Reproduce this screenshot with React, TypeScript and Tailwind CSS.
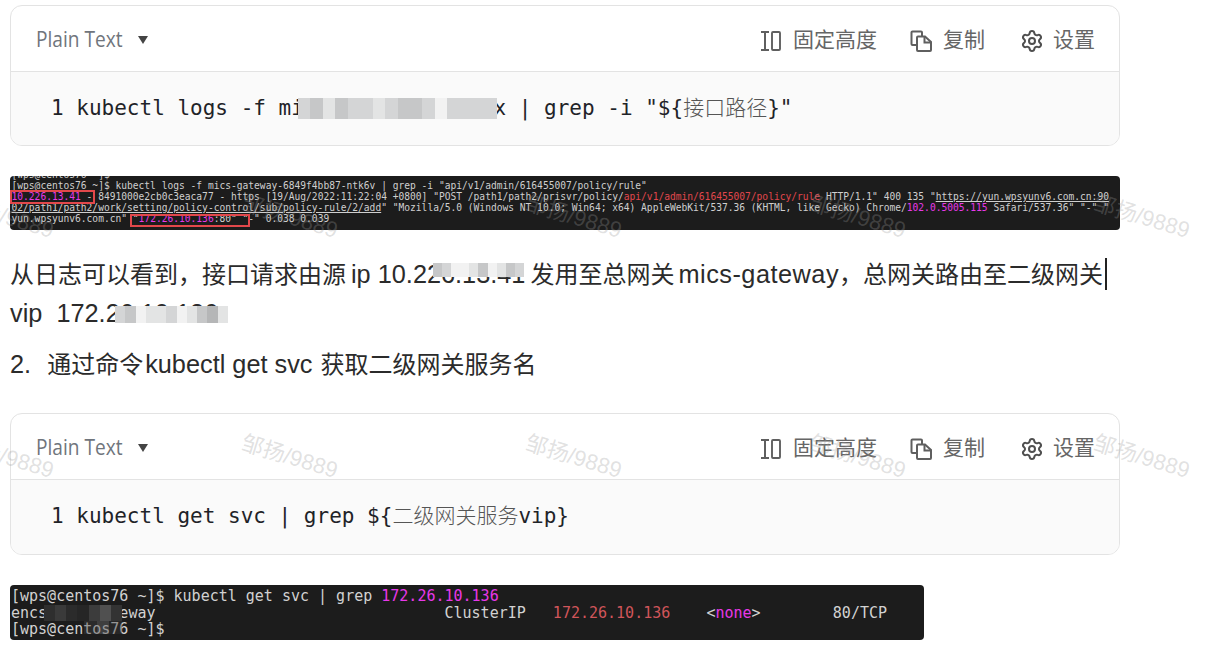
import { Settings } from "lucide-react";

const sans = "font-['Liberation_Sans','Noto_Sans_CJK_SC',sans-serif]";
const ui = "font-['Roboto','Noto_Sans_CJK_SC',sans-serif]";
const mono = "font-['DejaVu_Sans_Mono','Noto_Sans_CJK_SC',monospace]";
const cjkThin = "font-['Noto_Sans_CJK_SC',serif] font-light text-[#555] text-[21px]";

function HeightIcon() {
  return (
    <svg width="22" height="22" viewBox="0 0 22 22" fill="none" stroke="#5f5f5f" strokeWidth="2">
      <path d="M1 2h8M5 2v18M1 20h8" />
      <rect x="12" y="2" width="8" height="18" rx="1" strokeWidth="1.9" />
    </svg>
  );
}

function CopyIcon() {
  return (
    <svg width="23" height="22" viewBox="0 0 23 22" fill="none" stroke="#5f5f5f" strokeWidth="2">
      <path d="M7 15H2.5a1 1 0 0 1-1-1V2.5a1 1 0 0 1 1-1H11a1 1 0 0 1 1 1V6" />
      <path d="M8 6.5h7l6 5.5v8a1 1 0 0 1-1 1H8a1 1 0 0 1-1-1V7.5a1 1 0 0 1 1-1z" />
      <path d="M14.5 7v5.5H21" />
    </svg>
  );
}

function CodeCard({ children, className }: { children: React.ReactNode; className: string }) {
  return (
    <div className={`w-[1110px] rounded-[12px] border border-[#e3e3e3] overflow-hidden flex flex-col bg-white ${className}`}>
      <div className={`h-[66px] shrink-0 border-b border-[#e3e3e3] flex items-center pl-[25px] pr-[24px] pt-[2px] ${ui}`}>
        <span className="text-[21px] text-[#70757c] w-[87px] whitespace-nowrap font-['Open_Sans',sans-serif] font-normal scale-x-[0.91] origin-left">Plain Text</span>
        <span className="ml-[15px] w-0 h-0 border-l-[5px] border-r-[5px] border-t-[8px] border-l-transparent border-r-transparent border-t-[#444]" />
        <div className="ml-auto flex items-center text-[21px] text-[#666] leading-none pt-[2px]">
          <HeightIcon />
          <span className="ml-[11px]">固定高度</span>
          <span className="ml-[33px]"><CopyIcon /></span>
          <span className="ml-[10px]">复制</span>
          <Settings className="ml-[35px]" size={24} strokeWidth={2} color="#4f4f4f" />
          <span className="ml-[9px]">设置</span>
        </div>
      </div>
      <div className={`flex-1 bg-[#fafafa] pl-[40px] pt-[18px] text-[21px] leading-[32px] text-[#1f2328] whitespace-pre ${mono}`}>
        {children}
      </div>
    </div>
  );
}

function Mosaic({ className, cells }: { className: string; cells: string[] }) {
  return (
    <div className={`absolute flex ${className}`}>
      {cells.map((c, i) => (
        <div key={i} className={`flex-1 ${c}`} />
      ))}
    </div>
  );
}

function Mark({ className }: { className: string }) {
  return (
    <div className={`absolute rotate-[17deg] text-[22px] leading-none text-[#9a9a9a]/30 whitespace-nowrap ${sans} ${className}`}>
      邹扬/9889
    </div>
  );
}

function L({ children, className = "" }: { children: React.ReactNode; className?: string }) {
  return <span className={`text-[25.3px] ${className}`}>{children}</span>;
}

const a = "bg-[#d4d5d6]";
const b = "bg-[#c6c7c8]";
const c = "bg-[#e3e4e4]";
const d = "bg-[#b5b6b7]";
const e = "bg-[#f2f2f2]";

export default function App() {
  return (
    <div className={`relative w-[1231px] h-[663px] overflow-hidden bg-white pt-[5px] pl-[10px] ${sans}`}>
      <CodeCard className="h-[141px]">
        <span>1 kubectl logs -f mics-gateway-ntk6x | grep -i "${"{"}<span className={cjkThin}>接口路径</span>{"}"}"</span>
      </CodeCard>

      <div className="mt-[30px] w-[1110px] h-[54px] rounded-[4px] bg-[#1c1c1c] overflow-hidden font-['DejaVu_Sans_Mono',monospace] text-[9.6px] leading-[11px] text-[#cfcfcf] whitespace-pre pl-[1.5px]">
        <div className="-mt-[7px]">[wps@centos76 ~]$</div>
        <div>[wps@centos76 ~]$ kubectl logs -f mics-gateway-6849f4bb87-ntk6v | grep -i "api/v1/admin/616455007/policy/rule"</div>
        <div>
          <span className="text-[#e838e8]">10.226.13.41</span> - 8491000e2cb0c3eaca77 - https [19/Aug/2022:11:22:04 +0800] "POST /path1/path2/prisvr/policy/<span className="text-[#e0474c]">api/v1/admin/616455007/policy/rule</span> HTTP/1.1" 400 135 "<span className="underline">https://yun.wpsyunv6.com.cn:90</span>
        </div>
        <div>
          <span className="underline">02/path1/path2/work/setting/policy-control/sub/policy-rule/2/add</span>" "Mozilla/5.0 (Windows NT 10.0; Win64; x64) AppleWebKit/537.36 (KHTML, like Gecko) Chrome/<span className="text-[#e838e8]">102.0.5005.115</span> Safari/537.36" "-" "
        </div>
        <div>
          yun.wpsyunv6.com.cn" "<span className="text-[#e838e8]">172.26.10.136</span>:80" "-" 0.038 0.039
        </div>
      </div>

      <div className="mt-[25px] text-[24px] leading-[39px] text-[#2b2b2b] whitespace-nowrap">
        <p>从日志可以看到，接口请求由源<L className="ml-[5px]">ip 10.226.13.41</L><span className="ml-[5px]">发用至总网关</span><L className="ml-[4px] tracking-[0.5px]">mics-gateway</L>，总网关路由至二级网关</p>
        <p><L>vip&nbsp; 172.26.10.136</L></p>
        <p className="mt-[12px]"><L className="mr-[2px]">2.&nbsp;&nbsp;</L>通过命令<L className="ml-[2px]">kubectl get svc</L><span className="ml-[8px]">获取二级网关服务名</span></p>
      </div>

      <div className="mt-[29px]">
        <CodeCard className="h-[142px]">
          <span>1 kubectl get svc | grep ${"{"}<span className={cjkThin}>二级网关服务</span>vip{"}"}</span>
        </CodeCard>
      </div>

      <div className="mt-[30px] w-[914px] h-[55px] rounded-[4px] bg-[#1c1c1c] overflow-hidden font-['DejaVu_Sans_Mono',monospace] text-[15px] leading-[16.5px] text-[#d2d2d2] whitespace-pre pl-[1px] pt-[3px]">
        <div>[wps@centos76 ~]$ kubectl get svc | grep <span className="text-[#e838e8]">172.26.10.136</span></div>
        <div>encs-mic-gateway                                ClusterIP   <span className="text-[#d0555a]">172.26.10.136</span>    &lt;<span className="text-[#e838e8]">none</span>&gt;        80/TCP</div>
        <div>[wps@centos76 ~]$</div>
      </div>

      {/* red annotation boxes */}
      <div className="absolute left-[10px] top-[190px] w-[85px] h-[14px] border-2 border-[#e2484b]" />
      <div className="absolute left-[130px] top-[214px] w-[120px] h-[13px] border-2 border-[#e2484b]" />

      {/* text caret */}
      <div className="absolute left-[1105px] top-[258px] w-[2px] h-[32px] bg-[#222]" />

      {/* pixelated redactions */}
      <Mosaic className="left-[298px] top-[98px] w-[199px] h-[21px]" cells={[a, b, c, b, a, a, c, a, b, b, a, e, a, a, a, a]} />
      <Mosaic className="left-[433px] top-[263px] w-[91px] h-[14px]" cells={[b, a, e, e, c, b, e, c, b, a]} />
      <Mosaic className="left-[115px] top-[306px] w-[113px] h-[17px]" cells={[a, b, e, c, c, a, e, c, b, d, c]} />
      <Mosaic className="left-[44px] top-[605px] w-[78px] h-[16px]" cells={["bg-[#2e2e2e]", "bg-[#3a3a3a]", "bg-[#2b2b2b]", "bg-[#262626]", "bg-[#3c3c3c]", "bg-[#505050]", "bg-[#333]"]} />
      <Mosaic className="left-[84px] top-[621px] w-[38px] h-[13px]" cells={["bg-[#444]/40", "bg-[#606060]/50", "bg-[#3a3a3a]/40"]} />

      {/* watermark */}
      <Mark className="-left-[44px] top-[206px]" />
      <Mark className="left-[240px] top-[206px]" />
      <Mark className="left-[524px] top-[206px]" />
      <Mark className="left-[808px] top-[206px]" />
      <Mark className="left-[1092px] top-[206px]" />
      <Mark className="-left-[44px] top-[446px]" />
      <Mark className="left-[240px] top-[446px]" />
      <Mark className="left-[524px] top-[446px]" />
      <Mark className="left-[808px] top-[446px]" />
      <Mark className="left-[1092px] top-[446px]" />
    </div>
  );
}
